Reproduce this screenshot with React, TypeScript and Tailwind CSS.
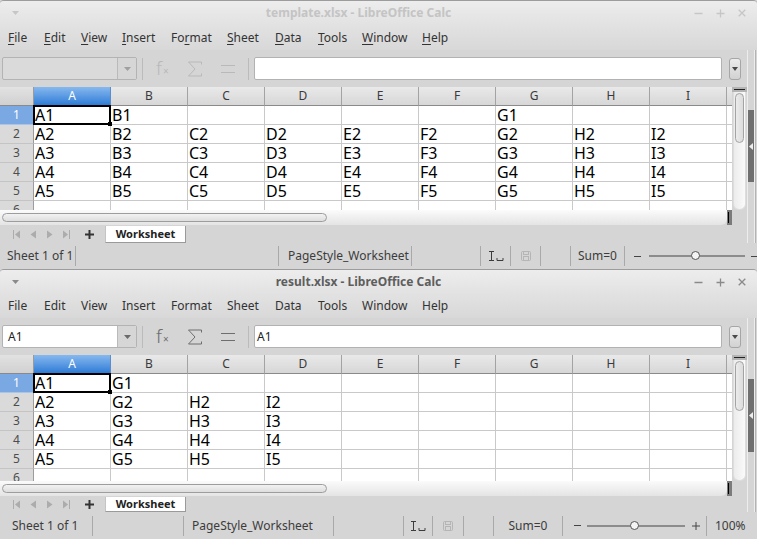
import React from 'react';

const COLS = ['A', 'B', 'C', 'D', 'E', 'F', 'G', 'H', 'I', ''];
const LETTERS = ['A', 'B', 'C', 'D', 'E', 'F', 'G', 'H', 'I'];

const topRows: string[][] = [1, 2, 3, 4, 5].map((r) =>
  r === 1 ? ['A1', 'B1', '', '', '', '', 'G1', '', '', ''] : [...LETTERS.map((l) => l + r), '']
);
const bottomRows: string[][] = [1, 2, 3, 4, 5].map((r) => {
  const base = r === 1 ? ['A1', 'G1'] : ['A' + r, 'G' + r, 'H' + r, 'I' + r];
  return [...base, ...Array(10 - base.length).fill('')];
});
const emptyRow: string[] = Array(10).fill('');

type MenuItem = { pre: string; u: string; post: string; w: string };
const MENU: MenuItem[] = [
  { pre: '', u: 'F', post: 'ile', w: 'w-[36px]' },
  { pre: '', u: 'E', post: 'dit', w: 'w-[37px]' },
  { pre: '', u: 'V', post: 'iew', w: 'w-[41px]' },
  { pre: '', u: 'I', post: 'nsert', w: 'w-[49px]' },
  { pre: 'Fo', u: 'r', post: 'mat', w: 'w-[56px]' },
  { pre: '', u: 'S', post: 'heet', w: 'w-[48px]' },
  { pre: '', u: 'D', post: 'ata', w: 'w-[43px]' },
  { pre: '', u: 'T', post: 'ools', w: 'w-[44px]' },
  { pre: '', u: 'W', post: 'indow', w: 'w-[60px]' },
  { pre: '', u: 'H', post: 'elp', w: 'w-[30px]' },
];

const seg = 'h-[20px] flex items-center border-l border-[#a9a9a9] shrink-0';

function TriDown({ color, w = 7, h = 4 }: { color: string; w?: number; h?: number }) {
  return (
    <svg width={w} height={h} viewBox={`0 0 ${w} ${h}`}>
      <path d={`M0 0H${w}L${w / 2} ${h}Z`} fill={color} />
    </svg>
  );
}

function TitleBar({ title, active }: { title: string; active: boolean }) {
  const c = active ? '#8a8a8a' : '#c6c6c6';
  return (
    <div className="h-[24px] shrink-0 flex items-center bg-linear-to-b from-[#ededed] to-[#e2e2e2]">
      <div className="w-[30px] shrink-0 flex justify-center">
        <TriDown color={c} />
      </div>
      <div className={`flex-1 text-center text-[12px] font-bold whitespace-nowrap ${active ? 'text-[#5e5e5e]' : 'text-[#c4c4c4]'}`}>
        {title}
      </div>
      <div className="w-[70px] shrink-0 flex items-center pr-[4px]">
        <div className="w-[22px] flex justify-center">
          <svg width="9" height="9" viewBox="0 0 9 9">
            <path d="M0.5 4.5H8.5" stroke={c} strokeWidth="1.3" />
          </svg>
        </div>
        <div className="w-[22px] flex justify-center">
          <svg width="9" height="9" viewBox="0 0 9 9">
            <path d="M0.5 4.5H8.5M4.5 0.5V8.5" stroke={c} strokeWidth="1.3" />
          </svg>
        </div>
        <div className="w-[22px] flex justify-center">
          <svg width="8" height="8" viewBox="0 0 8 8">
            <path d="M0.7 0.7L7.3 7.3M7.3 0.7L0.7 7.3" stroke={c} strokeWidth="1.3" />
          </svg>
        </div>
      </div>
    </div>
  );
}

function MenuBar({ active, h }: { active: boolean; h: string }) {
  return (
    <div className={`${h} shrink-0 flex items-center pl-[8px] text-[12px] text-[#333333] bg-linear-to-b from-[#e2e2e2] to-[#d8d8d8]`}>
      {MENU.map((m) => (
        <div key={m.u + m.post} className={`${m.w} shrink-0 whitespace-nowrap`}>
          {m.pre}
          <span className={active ? '' : 'underline decoration-1 underline-offset-[2px]'}>{m.u}</span>
          {m.post}
        </div>
      ))}
    </div>
  );
}

function Toolbar({ active }: { active: boolean }) {
  const ic = active ? '#6e6e6e' : '#b9b9b9';
  return (
    <div className="h-[37px] shrink-0 flex items-center">
      <div className={`ml-[2px] w-[135px] h-[23px] shrink-0 flex border border-[#b3b3b3] rounded-[2px] overflow-hidden ${active ? 'bg-white' : 'bg-[#dadada]'}`}>
        <div className="flex-1 flex items-center pl-[5px] text-[12px] text-[#222222]">{active ? 'A1' : ''}</div>
        <div className="w-[19px] border-l border-[#bababa] bg-[#d6d6d6] flex items-center justify-center">
          <TriDown color={active ? '#6a6a6a' : '#a0a0a0'} />
        </div>
      </div>
      <div className="ml-[5px] w-px h-[22px] bg-[#bbbbbb] shrink-0" />
      <div className="ml-[13px] w-[16px] shrink-0 flex items-baseline leading-none" style={{ color: ic }}>
        <span className="text-[19px] font-light">f</span>
        <span className="text-[10px] ml-[1px]">×</span>
      </div>
      <div className="ml-[15px] shrink-0 flex items-center">
        <svg width="16" height="16" viewBox="0 0 16 16">
          <polyline points="14.5,3.5 14.5,1 1.5,1 8,8 1.5,15 14.5,15 14.5,12.5" fill="none" stroke={ic} strokeWidth="1" />
        </svg>
      </div>
      <div className="ml-[18px] shrink-0 flex items-center">
        <svg width="14" height="10" viewBox="0 0 14 10">
          <path d="M0 1.5H14M0 8.5H14" stroke={ic} strokeWidth="1" />
        </svg>
      </div>
      <div className="ml-[13px] w-px h-[22px] bg-[#bbbbbb] shrink-0" />
      <div className="ml-[5px] flex-1 h-[23px] bg-white border border-[#b2b2b2] rounded-[2px] flex items-center pl-[2px] text-[12px] text-[#222222]">
        {active ? 'A1' : ''}
      </div>
      <div className="ml-[7px] mr-[6px] w-[12px] h-[22px] shrink-0 rounded-[3px] border border-[#a6a6a6] bg-linear-to-b from-[#ececec] to-[#d2d2d2] flex items-center justify-center">
        <TriDown color="#4a4a4a" w={6} h={4} />
      </div>
    </div>
  );
}

function HeaderRow() {
  return (
    <div className="flex h-[19px] shrink-0">
      <div className="w-[34px] shrink-0 border-r border-b border-[#9a9a9a] border-b-[#8a8a8a] bg-linear-to-b from-[#e2e2e2] to-[#d0d0d0]" />
      {COLS.map((c, i) =>
        i === 0 ? (
          <div
            key={i}
            className="w-[77px] shrink-0 flex items-center justify-center text-[12px] text-white border-r border-b border-[#5b8dcb] border-b-[#2a6bb8] bg-linear-to-b from-[#86b8ee] to-[#2d7cd6]"
          >
            {c}
          </div>
        ) : (
          <div
            key={i}
            className="w-[77px] shrink-0 flex items-center justify-center text-[12px] text-[#3a3a3a] border-r border-b border-[#a3a3a3] border-b-[#8a8a8a] bg-linear-to-b from-[#e9e9e9] to-[#d7d7d7]"
          >
            {c}
          </div>
        )
      )}
    </div>
  );
}

function DataRow({ n, cells, selected }: { n: number; cells: string[]; selected: boolean }) {
  return (
    <div className="flex shrink-0 h-[19px]">
      <div
        className={`w-[34px] shrink-0 flex items-center justify-center text-[12px] border-r border-b ${
          selected
            ? 'bg-[#7aa8e2] text-white border-r-[#5b8ccb] border-b-[#a9c6ea]'
            : 'bg-[#dadada] text-[#4d4d4d] border-r-[#9c9c9c] border-b-[#c4c4c4]'
        }`}
      >
        {n}
      </div>
      {cells.map((c, i) => (
        <div
          key={i}
          className="relative w-[77px] shrink-0 border-r border-b border-[#c9c9c9] bg-white pl-[1px] text-[16px] leading-[18px] text-black whitespace-nowrap"
        >
          {c}
          {selected && i === 0 && (
            <div className="absolute left-[-1px] top-[-1px] w-[78px] h-[20px] border-2 border-black z-10">
              <div className="absolute right-[-3px] bottom-[-3px] w-[4px] h-[4px] bg-black" />
            </div>
          )}
        </div>
      ))}
    </div>
  );
}

function VScroll() {
  return (
    <div className="w-[15px] shrink-0 flex flex-col">
      <div className="h-[5px] bg-[#b4b4b4] flex items-center justify-center">
        <div className="w-[11px] h-[1px] bg-[#222222]" />
      </div>
      <div className="flex-1 mx-[1px] rounded-b-[6px] bg-linear-to-r from-[#ececec] to-[#fafafa] border-x border-b border-[#dddddd] pt-[1px] px-[1px]">
        <div className="h-[50px] rounded-full border border-[#a3a3a3] bg-linear-to-r from-[#ebebeb] to-[#dcdcdc]" />
      </div>
    </div>
  );
}

function HScroll() {
  return (
    <div className="flex h-[15px] shrink-0">
      <div className="w-[727px] shrink-0 rounded-br-[6px] bg-linear-to-b from-[#fbfbfb] to-[#e4e4e4] pl-[2px] pt-[3px]">
        <div className="w-[325px] h-[9px] rounded-full border border-[#9d9d9d] bg-linear-to-b from-[#f2f2f2] to-[#dedede]" />
      </div>
      <div className="w-[5px] shrink-0 bg-[#7b7b7b] flex pl-[1px]">
        <div className="w-[1px] bg-black my-[2px]" />
      </div>
    </div>
  );
}

function TabBar({ h }: { h: string }) {
  const nc = '#acacac';
  return (
    <div className={`${h} shrink-0 flex items-stretch`}>
      <div className="ml-[13px] flex items-center">
        <svg width="7" height="9" viewBox="0 0 7 9">
          <path d="M0.5 0V9" stroke={nc} strokeWidth="1" />
          <path d="M7 0.5L2 4.5L7 8.5Z" fill={nc} />
        </svg>
      </div>
      <div className="ml-[10px] flex items-center">
        <svg width="6" height="9" viewBox="0 0 6 9">
          <path d="M6 0.5L0.5 4.5L6 8.5Z" fill={nc} />
        </svg>
      </div>
      <div className="ml-[11px] flex items-center">
        <svg width="6" height="9" viewBox="0 0 6 9">
          <path d="M0 0.5L5.5 4.5L0 8.5Z" fill={nc} />
        </svg>
      </div>
      <div className="ml-[10px] flex items-center">
        <svg width="7" height="9" viewBox="0 0 7 9">
          <path d="M0 0.5L5 4.5L0 8.5Z" fill={nc} />
          <path d="M6.5 0V9" stroke={nc} strokeWidth="1" />
        </svg>
      </div>
      <div className="ml-[15px] flex items-center">
        <svg width="9" height="9" viewBox="0 0 9 9">
          <path d="M4.5 0V9M0 4.5H9" stroke="#333333" strokeWidth="2" />
        </svg>
      </div>
      <div className="ml-[11px] w-[81px] mt-[1px] bg-white border-l border-r border-b border-[#9a9a9a] border-l-[#c4c4c4] flex items-center justify-center text-[11px] font-bold text-[#222222]">
        Worksheet
      </div>
    </div>
  );
}

function Sidebar({ top, h }: { top: string; h: string }) {
  return (
    <div className="w-[8px] shrink-0 border-x border-[#ededed] flex flex-col">
      <div className={top} />
      <div className={`${h} bg-[#6f6f6f] flex items-center justify-center`}>
        <svg width="4" height="7" viewBox="0 0 4 7">
          <path d="M4 0V7L0 3.5Z" fill="#eeeeee" />
        </svg>
      </div>
    </div>
  );
}

function SelIcon() {
  return (
    <svg width="16" height="10" viewBox="0 0 16 10">
      <path d="M1 0.5H6M3.5 0.5V9.5M1 9.5H6" stroke="#3c3c3c" strokeWidth="1" fill="none" />
      <path d="M9 7V9.5H15V7" stroke="#3c3c3c" strokeWidth="1" fill="none" />
    </svg>
  );
}

function SaveIcon() {
  return (
    <svg width="10" height="10" viewBox="0 0 10 10">
      <rect x="0.5" y="0.5" width="9" height="9" rx="1" fill="none" stroke="#b5b5b5" />
      <rect x="2.5" y="0.5" width="5" height="3" fill="none" stroke="#b5b5b5" />
      <rect x="2.5" y="5.5" width="5" height="4" fill="none" stroke="#b5b5b5" />
    </svg>
  );
}

function Minus() {
  return (
    <svg width="7" height="3" viewBox="0 0 7 3">
      <path d="M0 1.5H7" stroke="#444444" strokeWidth="1" />
    </svg>
  );
}

function Plus() {
  return (
    <svg width="8" height="8" viewBox="0 0 8 8">
      <path d="M0 4H8M4 0V8" stroke="#444444" strokeWidth="1" />
    </svg>
  );
}

function Knob() {
  return <div className="w-[9px] h-[9px] rounded-full border-[1.5px] border-[#555555] bg-[#f4f4f4]" />;
}

function TopStatus() {
  return (
    <div className="h-[26px] shrink-0 flex items-center text-[12px] text-[#3c3c3c] whitespace-nowrap overflow-hidden">
      <div className="w-[75px] shrink-0 pl-[7px]">Sheet 1 of 1</div>
      <div className={`${seg} w-[203px]`} />
      <div className={`${seg} w-[133px] pl-[9px]`}>PageStyle_Worksheet</div>
      <div className={`${seg} w-[69px]`} />
      <div className={`${seg} w-[30px] justify-center`}>
        <SelIcon />
      </div>
      <div className={`${seg} w-[30px] justify-center`}>
        <SaveIcon />
      </div>
      <div className={`${seg} w-[30px]`} />
      <div className={`${seg} w-[54px] justify-center`}>Sum=0</div>
      <div className={`${seg} pl-[9px]`}>
        <Minus />
        <div className="ml-[8px] relative w-[96px] h-[2px] bg-[#8c8c8c] flex items-center">
          <div className="absolute left-[42px] top-[-4px]">
            <Knob />
          </div>
        </div>
        <div className="ml-[6px]">
          <Minus />
        </div>
      </div>
    </div>
  );
}

function BottomStatus() {
  return (
    <div className="h-[27px] shrink-0 flex items-center text-[12px] text-[#3c3c3c] whitespace-nowrap overflow-hidden">
      <div className="w-[92px] shrink-0 pl-[12px]">Sheet 1 of 1</div>
      <div className={`${seg} w-[91px]`} />
      <div className={`${seg} w-[150px] pl-[8px]`}>PageStyle_Worksheet</div>
      <div className={`${seg} w-[70px]`} />
      <div className={`${seg} w-[29px] justify-center`}>
        <SelIcon />
      </div>
      <div className={`${seg} w-[31px] justify-center`}>
        <SaveIcon />
      </div>
      <div className={`${seg} w-[30px]`} />
      <div className={`${seg} w-[69px] justify-center`}>Sum=0</div>
      <div className={`${seg} w-[144px] pl-[11px]`}>
        <Minus />
        <div className="ml-[6px] relative w-[98px] h-[2px] bg-[#8c8c8c]">
          <div className="absolute left-[43px] top-[-4px]">
            <Knob />
          </div>
        </div>
        <div className="ml-[7px]">
          <Plus />
        </div>
      </div>
      <div className={`${seg} pl-[8px]`}>100%</div>
    </div>
  );
}

type WinProps = {
  title: string;
  active: boolean;
  rows: string[][];
  heightCls: string;
  menuH: string;
  row6H: string;
  tabH: string;
  sideTop: string;
  sideH: string;
  status: React.ReactNode;
};

function Window(p: WinProps) {
  return (
    <div className={`w-[757px] ${p.heightCls} shrink-0 flex flex-col bg-[#d5d5d5] border-t border-[#9c9c9c] rounded-t-[4px] overflow-hidden`}>
      <TitleBar title={p.title} active={p.active} />
      <MenuBar active={p.active} h={p.menuH} />
      <div className="flex shrink-0">
        <div className="w-[747px] shrink-0 flex flex-col">
          <Toolbar active={p.active} />
          <div className="flex shrink-0">
            <div className="w-[732px] shrink-0 overflow-hidden flex flex-col">
              <HeaderRow />
              {p.rows.map((r, i) => (
                <DataRow key={i} n={i + 1} cells={r} selected={i === 0} />
              ))}
              <div className={`${p.row6H} overflow-hidden shrink-0`}>
                <DataRow n={6} cells={emptyRow} selected={false} />
              </div>
            </div>
            <VScroll />
          </div>
          <HScroll />
          <TabBar h={p.tabH} />
        </div>
        <Sidebar top={p.sideTop} h={p.sideH} />
        <div className="w-[2px] shrink-0 border-l border-[#b3b3b3]" />
      </div>
      {p.status}
    </div>
  );
}

export default function App() {
  return (
    <div className="w-[757px] h-[539px] overflow-hidden bg-[#d5d5d5] font-['Noto_Sans',sans-serif] flex flex-col">
      <Window
        title="template.xlsx - LibreOffice Calc"
        active={false}
        rows={topRows}
        heightCls="h-[269px]"
        menuH="h-[25px]"
        row6H="h-[9px]"
        tabH="h-[18px]"
        sideTop="h-[60px]"
        sideH="h-[72px]"
        status={<TopStatus />}
      />
      <Window
        title="result.xlsx - LibreOffice Calc"
        active={true}
        rows={bottomRows}
        heightCls="h-[270px]"
        menuH="h-[24px]"
        row6H="h-[12px]"
        tabH="h-[16px]"
        sideTop="h-[61px]"
        sideH="h-[73px]"
        status={<BottomStatus />}
      />
    </div>
  );
}
